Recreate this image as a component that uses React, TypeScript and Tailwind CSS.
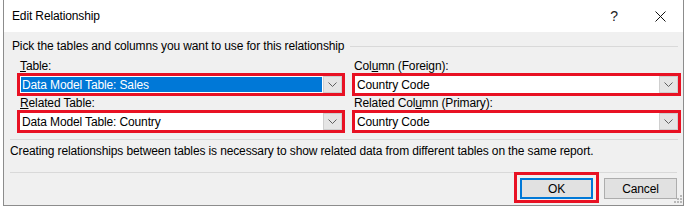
import React from "react";

const font = "font-['Liberation_Sans',Arial,sans-serif]";

function Chevron() {
  return (
    <svg width="9" height="5" viewBox="0 0 9 5">
      <path d="M0.5 0.5 L4.5 4.5 L8.5 0.5" fill="none" stroke="#5f5f5f" strokeWidth="1" />
    </svg>
  );
}

function Combo(props: { value: string; selected?: boolean; width: string }) {
  const { value, selected, width } = props;
  return (
    <div className={`flex h-[23px] ${width} border-[3px] border-[#e81123]`}>
      <div className="flex flex-1 bg-white p-[1px]">
        <div
          className={`flex flex-1 items-center pl-[1px] ${
            selected ? "bg-[#0078d7] text-white" : "text-black"
          }`}
        >
          {value}
        </div>
      </div>
      <div className="flex w-[19px] items-center justify-center border border-[#cfcfcf] bg-[#e5e5e5]">
        <Chevron />
      </div>
    </div>
  );
}

function SizeGrip() {
  const dots = [
    [6, 0],
    [3, 3],
    [6, 3],
    [0, 6],
    [3, 6],
    [6, 6],
  ];
  return (
    <svg width="8" height="8" viewBox="0 0 8 8" className="absolute bottom-[2px] right-[1px]">
      {dots.map(([x, y]) => (
        <rect key={`${x}-${y}`} x={x} y={y} width="2" height="2" fill="#b8b8b8" />
      ))}
    </svg>
  );
}

export default function App() {
  return (
    <div className={`h-[210px] w-[689px] bg-white text-[12px] tracking-[-0.13px] text-black ${font}`}>
      <div className="relative ml-[3px] flex h-[206px] w-[681px] flex-col border-x border-b border-[#8c8c8c]">
        {/* title bar */}
        <div className="flex h-[32px] items-center bg-white pl-[8px]">
          <span>Edit Relationship</span>
          <div className="ml-auto flex h-full">
            <div className="flex w-[46px] items-center justify-center text-[14px] text-[#222]">?</div>
            <div className="flex w-[46px] items-center justify-center">
              <svg width="11" height="11" viewBox="0 0 11 11">
                <path d="M0.5 0.5 L10.5 10.5 M10.5 0.5 L0.5 10.5" stroke="#111" strokeWidth="1" />
              </svg>
            </div>
          </div>
        </div>

        {/* body */}
        <div className="flex flex-1 flex-col bg-[#f0f0f0]">
          <div className="mt-[6px] flex h-[16px] items-center pl-[8px] pr-[5px]">
            <span>Pick the tables and columns you want to use for this relationship</span>
            <div className="ml-[6px] h-px flex-1 bg-[#d9d9d9]" />
          </div>

          <div className="mt-[6px] flex gap-[7px] pl-[13px]">
            <div className="flex flex-col">
              <div className="h-[13px] pl-[3px] leading-[13px]">
                <span className="underline">T</span>able:
              </div>
              <Combo value="Data Model Table: Sales" selected width="w-[328px]" />
              <div className="h-[14px] pl-[3px] leading-[14px]">
                <span className="underline">R</span>elated Table:
              </div>
              <Combo value="Data Model Table: Country" width="w-[328px]" />
            </div>
            <div className="flex flex-col">
              <div className="h-[13px] pl-[2px] leading-[13px]">
                Col<span className="underline">u</span>mn (Foreign):
              </div>
              <Combo value="Country Code" width="w-[329px]" />
              <div className="h-[14px] pl-[2px] leading-[14px]">
                Related Col<span className="underline">u</span>mn (Primary):
              </div>
              <Combo value="Country Code" width="w-[329px]" />
            </div>
          </div>

          <div className="ml-[6px] mr-[5px] mt-[6px] h-px bg-[#d9d9d9]" />

          <div className="mt-[4px] h-[14px] pl-[6px] leading-[14px]">
            Creating relationships between tables is necessary to show related data from different tables on the same report.
          </div>

          <div className="mx-[6px] mt-[14px] flex items-start justify-end gap-[5px] border-t border-[#d9d9d9]">
            <div className="-mt-px border-[3px] border-[#e81123] p-[3px] pb-[1px]">
              <button
                type="button"
                className="flex h-[21px] w-[73px] items-center justify-center border-2 border-[#0078d7] bg-[#e1e1e1]"
              >
                OK
              </button>
            </div>
            <button
              type="button"
              className="mt-[5px] flex h-[21px] w-[73px] items-center justify-center border border-[#adadad] bg-[#e1e1e1]"
            >
              Cancel
            </button>
          </div>
        </div>
        <SizeGrip />
      </div>
    </div>
  );
}
